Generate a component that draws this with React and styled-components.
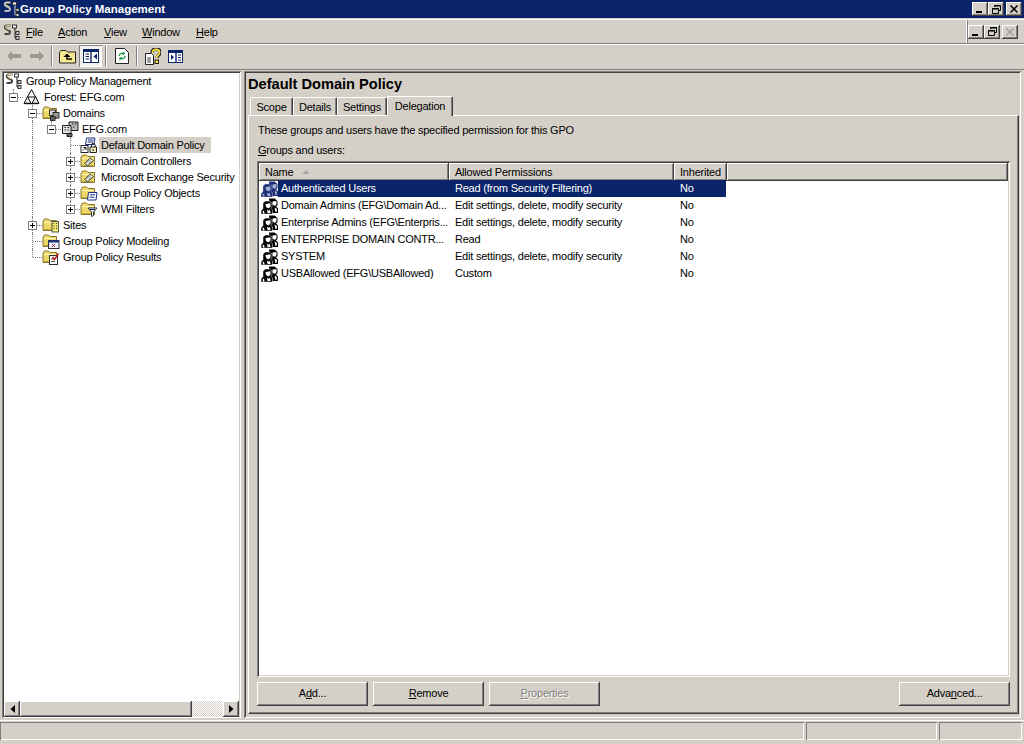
import React from "react";
import styled, { createGlobalStyle, css } from "styled-components";

const GlobalStyle = createGlobalStyle`
  html, body {
    margin: 0;
    padding: 0;
    background: #d4d0c8;
  }
  body {
    font-family: "Liberation Sans", Arial, sans-serif;
    font-size: 11px;
    letter-spacing: -0.22px;
    color: #000;
  }
  svg {
    flex: none;
  }
`;

const raised = css`
  box-shadow: inset -1px -1px #404040, inset 1px 1px #fff, inset -2px -2px #808080;
`;

const sunken = css`
  box-shadow: inset 1px 1px #808080, inset -1px -1px #fff, inset 2px 2px #404040, inset -2px -2px #d4d0c8;
`;

const Window = styled.div`
  width: 1024px;
  height: 744px;
  overflow: hidden;
  display: flex;
  flex-direction: column;
  background: #d4d0c8;
`;

const TitleBar = styled.div`
  height: 18px;
  background: #0a246a;
  display: flex;
  align-items: center;
  padding: 0 2px 0 3px;
  color: #fff;
  font-weight: bold;
  font-size: 11.5px;
  letter-spacing: 0;
`;

const TitleText = styled.span`
  flex: 1;
`;

const CaptionGroup = styled.div`
  display: flex;
  align-items: center;
`;

const CaptionButton = styled.div`
  width: 16px;
  height: 14px;
  background: #d4d0c8;
  margin-left: ${(p) => (p.$gap ? "2px" : "0")};
  display: flex;
  align-items: center;
  justify-content: center;
  color: ${(p) => (p.$disabled ? "#a0a0a0" : "#000")};
  ${raised}
`;

const MenuBar = styled.div`
  height: 25px;
  margin-top: 1px;
  display: flex;
  align-items: center;
  border-top: 1px solid #fff;
  border-bottom: 1px solid #808080;
  box-sizing: border-box;
  padding-left: 3px;
`;

const MenuItems = styled.div`
  display: flex;
  flex: 1;
  align-items: center;
  margin-left: 6px;
  height: 100%;
  border-right: 1px solid #fff;
  box-shadow: 1px 0 #808080;
`;

const MenuItem = styled.span`
  width: ${(p) => p.$w}px;
`;

const MdiButtons = styled.div`
  display: flex;
  padding: 0 3px 0 1px;
  width: 53px;
`;

const Toolbar = styled.div`
  height: 24px;
  border-top: 1px solid #fff;
  border-bottom: 1px solid #808080;
  display: flex;
  align-items: center;
  padding: 0 0 0 2px;
`;

const ToolStrip = styled.div`
  display: flex;
  align-items: center;
  margin-top: -2px;
`;

const ToolButton = styled.div`
  width: 23px;
  height: 22px;
  display: flex;
  align-items: center;
  justify-content: center;
  ${(p) =>
    p.$pressed &&
    css`
      background: repeating-conic-gradient(#fff 0 25%, #e8e6e0 0 50%) 0 0 / 2px 2px;
      box-shadow: inset 1px 1px #808080, inset -1px -1px #fff;
    `}
`;

const ToolSep = styled.div`
  width: 2px;
  height: 20px;
  margin: 0 3px;
  border-left: 1px solid #808080;
  border-right: 1px solid #fff;
  box-sizing: border-box;
`;

const Main = styled.div`
  flex: 1;
  display: flex;
  gap: 3px;
  padding: 1px 3px 2px 2px;
  min-height: 0;
`;

const TreePane = styled.div`
  width: 239px;
  display: flex;
  flex-direction: column;
  background: #fff;
  padding: 2px 2px 1px;
  box-sizing: border-box;
  ${sunken}
`;

const TreeBody = styled.div`
  flex: 1;
`;

const TreeRow = styled.div`
  height: 16px;
  display: flex;
  align-items: center;
  white-space: nowrap;
`;

const Guide = styled.div`
  position: relative;
  width: 19px;
  height: 16px;
  flex: none;
  &::before {
    content: "";
    display: ${(p) => (p.$up ? "block" : "none")};
    position: absolute;
    left: 9px;
    top: 0;
    bottom: ${(p) => (p.$down ? "0" : "8px")};
    border-left: 1px dotted #808080;
  }
  &::after {
    content: "";
    display: ${(p) => (p.$right ? "block" : "none")};
    position: absolute;
    left: 10px;
    right: 0;
    top: 8px;
    border-top: 1px dotted #808080;
  }
`;

const Expander = styled.svg`
  position: absolute;
  left: 5px;
  top: 4px;
  z-index: 1;
`;

const TreeIconSlot = styled.div`
  width: 18px;
  height: 16px;
  margin-left: ${(p) => (p.$root ? "1px" : "0")};
  flex: none;
  display: flex;
  align-items: center;
`;

const TreeLabel = styled.span`
  margin-left: 1px;
  padding: 1px 6px 1px 2px;
  line-height: 14px;
  background: ${(p) => (p.$selected ? "#d4d0c8" : "transparent")};
`;

const Scrollbar = styled.div`
  height: 16px;
  display: flex;
  background: repeating-conic-gradient(#d4d0c8 0 25%, #fff 0 50%) 0 0 / 2px 2px;
`;

const ScrollButton = styled.div`
  width: 16px;
  height: 16px;
  background: #d4d0c8;
  display: flex;
  align-items: center;
  justify-content: center;
  ${raised}
`;

const ScrollThumb = styled.div`
  width: 172px;
  background: #d4d0c8;
  ${raised}
`;

const ScrollTrack = styled.div`
  flex: 1;
`;

const DetailPane = styled.div`
  flex: 1;
  display: flex;
  flex-direction: column;
  padding: 2px 2px 4px 4px;
  min-width: 0;
  ${sunken}
`;

const PolicyTitle = styled.div`
  font-weight: bold;
  font-size: 14.6px;
  letter-spacing: 0;
  height: 22px;
  line-height: 22px;
`;

const TabStrip = styled.div`
  display: flex;
  align-items: flex-end;
  height: 20px;
  padding-left: 2px;
  position: relative;
  z-index: 1;
`;

const Tab = styled.div`
  width: ${(p) => p.$w}px;
  height: ${(p) => (p.$active ? "20px" : "18px")};
  line-height: ${(p) => (p.$active ? "18px" : "19px")};
  text-align: center;
  box-sizing: border-box;
  background: #d4d0c8;
  border-top: 1px solid #fff;
  border-left: 1px solid #fff;
  border-right: 1px solid #404040;
  border-radius: 2px 2px 0 0;
  margin-bottom: ${(p) => (p.$active ? "-1px" : "0")};
  box-shadow: inset -1px 0 #808080;
`;

const TabPanel = styled.div`
  flex: 1;
  display: flex;
  flex-direction: column;
  padding: 6px 8px 7px 8px;
  border-top: 1px solid #fff;
  border-left: 1px solid #fff;
  border-right: 1px solid #404040;
  border-bottom: 1px solid #404040;
  box-shadow: inset -1px -1px #808080;
  min-height: 0;
`;

const Description = styled.div`
  height: 14px;
  line-height: 14px;
  padding-left: 1px;
  margin-top: 1px;
`;

const GroupsLabel = styled.div`
  height: 14px;
  line-height: 14px;
  padding-left: 1px;
  margin-top: 6px;
  margin-bottom: 4px;
`;

const ListBox = styled.div`
  flex: 1;
  background: #fff;
  padding: 2px;
  min-height: 0;
  ${sunken}
`;

const ListHeader = styled.div`
  display: grid;
  grid-template-columns: 190px 225px 53px 1fr;
  height: 17px;
`;

const HeaderCell = styled.div`
  background: #d4d0c8;
  padding-left: 6px;
  line-height: 18px;
  display: flex;
  align-items: center;
  ${raised}
`;

const SortArrow = styled.span`
  width: 0;
  height: 0;
  margin-left: 9px;
  border-left: 4px solid transparent;
  border-right: 4px solid transparent;
  border-bottom: 4px solid #a8a8a8;
`;

const ListRow = styled.div`
  display: flex;
  height: 17px;
`;

const RowIcon = styled.div`
  width: 17px;
  padding-left: 2px;
  display: flex;
  align-items: center;
`;

const RowCells = styled.div`
  display: grid;
  grid-template-columns: 171px 225px 52px;
  line-height: 17px;
  background: ${(p) => (p.$selected ? "#0a246a" : "transparent")};
  color: ${(p) => (p.$selected ? "#fff" : "#000")};
`;

const NameCell = styled.div`
  padding-left: 3px;
  white-space: nowrap;
  overflow: hidden;
`;

const ValueCell = styled.div`
  padding-left: 6px;
  white-space: nowrap;
`;

const ButtonRow = styled.div`
  display: flex;
  gap: 5px;
  margin-top: 5px;
`;

const PushButton = styled.div`
  width: 111px;
  height: 24px;
  line-height: 23px;
  text-align: center;
  background: #d4d0c8;
  margin-left: ${(p) => (p.$push ? "auto" : "0")};
  color: ${(p) => (p.$disabled ? "#808080" : "#000")};
  text-shadow: ${(p) => (p.$disabled ? "1px 1px #fff" : "none")};
  ${raised}
`;

const StatusBar = styled.div`
  height: 24px;
  display: flex;
  gap: 2px;
  border-top: 1px solid #fff;
  padding: 1px 2px 4px 0;
  box-sizing: border-box;
`;

const StatusCell = styled.div`
  width: ${(p) => (p.$w ? `${p.$w}px` : "auto")};
  flex: ${(p) => (p.$w ? "none" : "1")};
  box-shadow: inset 1px 1px #808080, inset -1px -1px #fff;
`;

// icons

const MmcIcon = ({ light }) => {
  const ink = light ? "#e8e8e8" : "#222";
  return (
    <svg width="17" height="16" viewBox="0 0 17 16">
      <path d="M7.500 1.500H3.500C1.500 1.500 1 4 3 5l3 1.500C8 7.500 7 10 5 10H1.500" fill="none" stroke={light ? "#b8b8b8" : "#444"} strokeWidth="2" />
      <path d="M7 1.500H3.600C2.200 1.500 2 3.600 3.300 4.300l3 1.500" fill="none" stroke="#f0e090" strokeWidth="1" />
      <path d="M12 3v11M12 9h2M12 14h2" stroke={ink} fill="none" />
      <rect x="9.500" y="1" width="4" height="3" fill="#fff" stroke="#222" strokeWidth=".9" />
      <rect x="13" y="7.500" width="3" height="3" fill="#d8d8d8" stroke="#222" strokeWidth=".9" />
      <rect x="13" y="12.500" width="3" height="3" fill="#d8d8d8" stroke="#222" strokeWidth=".9" />
    </svg>
  );
};

const ForestIcon = () => (
  <svg width="17" height="16" viewBox="0 0 17 16">
    <path d="M8.500 .500L12.500 8H4.500Z" fill="#fff" stroke="#111" />
    <path d="M4.500 7.500L8 14.500H1Z" fill="#e8e8e8" stroke="#111" />
    <path d="M12.500 7.500L16 14.500H9Z" fill="#e8e8e8" stroke="#111" />
    <path d="M2 14.500h13" stroke="#111" strokeWidth="1.400" />
  </svg>
);

const FolderBase = () => (
  <>
    <path d="M1 4.500L2.500 2H6.500L8 3.500H14.500V13.500H1Z" fill="#eed868" stroke="#7a6a20" strokeWidth=".9" />
    <path d="M2 5.500h11.500" stroke="#fff8c8" />
    <path d="M2 12.500h11" stroke="#c4a838" />
  </>
);

const DomainsIcon = () => (
  <svg width="18" height="16" viewBox="0 0 18 16">
    <FolderBase />
    <rect x="7.500" y="5" width="6" height="5.500" fill="#d8d8d8" stroke="#222" strokeWidth=".9" />
    <rect x="11" y="7.500" width="6" height="5.500" fill="#9a9a9a" stroke="#222" strokeWidth=".9" />
    <rect x="8.500" y="11.500" width="4.500" height="4" fill="#666" stroke="#222" strokeWidth=".9" />
  </svg>
);

const DomainIcon = () => (
  <svg width="18" height="16" viewBox="0 0 18 16">
    <path d="M8 1h9v8.500H8z" fill="#b8b8b8" stroke="#222" />
    <path d="M1.500 4.500h8.500v8H1.500z" fill="#e0e0e0" stroke="#222" />
    <path d="M3.500 6.500h1.500M6.500 6.500H8M3.500 9H5M6.500 9H8M11 3h1.500M14 3h1.500M12 6h1.500" stroke="#222" />
    <path d="M6 12.500h5v3H6z" fill="#666" stroke="#222" />
  </svg>
);

const GpoLinkIcon = () => (
  <svg width="18" height="16" viewBox="0 0 18 16">
    <path d="M6.500 1H15l-1 6.500H5.500z" fill="#fff" stroke="#1a2f80" />
    <path d="M8 3h5.500M7.500 5h5.500" stroke="#1a2f80" />
    <rect x="1" y="8.500" width="7" height="7" fill="#fff" stroke="#222" />
    <path d="M3 13.500l3-3M3.500 10.500H6V13" fill="none" stroke="#222" />
    <path d="M10 10h6.500v5.500H10z" fill="#f0e8c0" stroke="#222" />
    <path d="M11.500 10V8a1.800 1.800 0 0 1 3.600 0v2" fill="none" stroke="#222" />
    <path d="M13.200 12v2" stroke="#222" />
  </svg>
);

const OuIcon = () => (
  <svg width="18" height="16" viewBox="0 0 18 16">
    <FolderBase />
    <path d="M4.500 10.500L10 5l3.500 2.500-5.500 5.500z" fill="#e4e4dc" stroke="#444" strokeWidth=".9" />
    <path d="M6.500 10l3.500-3.500M8 11.500l3.500-3.500" stroke="#666" strokeWidth=".8" />
  </svg>
);

const GpoFolderIcon = () => (
  <svg width="18" height="16" viewBox="0 0 18 16">
    <FolderBase />
    <path d="M8.500 7.500H17l-1 7.500H7.500z" fill="#fff" stroke="#1a2f80" />
    <path d="M10 9.800h5M9.500 12.200h5" stroke="#1a2f80" />
  </svg>
);

const WmiIcon = () => (
  <svg width="18" height="16" viewBox="0 0 18 16">
    <FolderBase />
    <path d="M8 7h9l-3.500 4v3.500l-2 1V11z" fill="#fff" stroke="#333" />
    <path d="M10 8.500h5" stroke="#1a2f80" />
  </svg>
);

const SitesIcon = () => (
  <svg width="18" height="16" viewBox="0 0 18 16">
    <FolderBase />
    <rect x="10" y="4.500" width="6.500" height="10.500" fill="#f4ee70" stroke="#444" strokeWidth=".9" />
    <path d="M11.500 6.500h1M14 6.500h1M11.500 9h1M14 9h1M11.500 11.500h1M14 11.500h1" stroke="#333" />
  </svg>
);

const ModelingIcon = () => (
  <svg width="18" height="16" viewBox="0 0 18 16">
    <FolderBase />
    <rect x="6.500" y="7.500" width="10.500" height="8" fill="#eeeeff" stroke="#333" />
    <rect x="6.500" y="7.500" width="10.500" height="2" fill="#1a2f80" />
    <path d="M10 11l3 3M13 11l-3 3" stroke="#a03030" />
  </svg>
);

const ResultsIcon = () => (
  <svg width="18" height="16" viewBox="0 0 18 16">
    <FolderBase />
    <rect x="7.500" y="6.500" width="8" height="9" fill="#fff" stroke="#333" />
    <path d="M9 10h3M9 12.500h4" stroke="#555" />
    <path d="M10.500 8l2 2.500 4-6" fill="none" stroke="#c01818" strokeWidth="1.400" />
  </svg>
);

// two overlapping figures; the selected row tints it blue instead of black
const GroupIcon = ({ selected }) => {
  const ink = selected ? "#1c2f72" : "#000";
  const skin = selected ? "#a4aed4" : "#fff";
  return (
    <svg width="17" height="17" viewBox="0 0 17 17">
      <path d="M8 1.500h5.500L16.500 4v4l-1.500 1.500 2 2v4.500H9z" fill={ink} />
      <path d="M11.500 4.500l4-.5v3l-1.500 2-2.500-1.500z" fill={skin} />
      <path d="M13.500 10.500l2.500 1.500-.5 3h-1z" fill={skin} />
      <path d="M2 6l2.500-2h4L11 6v4l-1 1.500 1.500 1.500v4H0v-3l2-2.500z" fill={ink} stroke={skin} strokeWidth=".5" />
      <path d="M4.500 7l5-.7v3.200L7.500 11.500 5 10z" fill={skin} />
      <path d="M6 12.500l1.500 1.200 1.500-1 .5 3.300H6.500z" fill={skin} />
      <path d="M1.500 14.500l1.500-1 .5 3H2z" fill={skin} />
    </svg>
  );
};

const ArrowIcon = ({ flip }) => (
  <svg width="14" height="10" viewBox="0 0 14 10" style={{ transform: flip ? "scaleX(-1)" : "none" }}>
    <path d="M0 5l5-5v3h9v4H5v3z" fill="#9a9890" />
  </svg>
);

const UpFolderIcon = () => (
  <svg width="17" height="15" viewBox="0 0 17 15">
    <path d="M.5 3.500L2 1.500h5L8.500 3h8v11H.5z" fill="#f6e98e" stroke="#222" />
    <path d="M8 7v3h5" fill="none" stroke="#000" strokeWidth="1.300" />
    <path d="M8 4.500L4.500 8h7z" fill="#000" />
  </svg>
);

const TreeToggleIcon = () => (
  <svg width="16" height="14" viewBox="0 0 16 14">
    <rect x=".5" y=".5" width="15" height="13" fill="#fff" stroke="#0a246a" />
    <rect x=".5" y=".5" width="15" height="2.500" fill="#0a246a" />
    <path d="M8 1v12" stroke="#0a246a" strokeWidth="1.400" />
    <path d="M2.500 5h3.500M2.500 7.500h3.500M2.500 10h3.500" stroke="#0a246a" strokeWidth="1.200" />
    <path d="M14 4.500v6l-3.500-3z" fill="#0a246a" />
  </svg>
);

const RefreshIcon = () => (
  <svg width="14" height="16" viewBox="0 0 14 16">
    <path d="M.5.500h9l4 4v11H.5z" fill="#fff" stroke="#222" />
    <path d="M4 8a3 3 0 0 1 5-2M10 8a3 3 0 0 1-5 2" fill="none" stroke="#109030" strokeWidth="1.200" />
    <path d="M9.500 3.500v3h-3zM4.500 12.500v-3h3z" fill="#109030" />
  </svg>
);

const HelpIcon = () => (
  <svg width="16" height="17" viewBox="0 0 16 17">
    <path d="M.5 5.500h6l2 2v9h-8z" fill="#fff" stroke="#222" />
    <path d="M2 10h4M2 12h4M2 14h4" stroke="#444" />
    <path d="M7 5c0-3 1.500-4 4-4s4 1.500 4 3.500c0 3-3 2.500-3 5.500" fill="none" stroke="#222" strokeWidth="3.400" />
    <path d="M7.500 5c0-2.500 1-3.500 3.500-3.500s3.500 1 3.500 3c0 3-3 2.500-3 5.500" fill="none" stroke="#f4e040" strokeWidth="1.800" />
    <rect x="10" y="12" width="3.500" height="3.500" fill="#f4e040" stroke="#222" />
  </svg>
);

const ActionPaneIcon = () => (
  <svg width="15" height="13" viewBox="0 0 15 13">
    <rect x=".5" y=".5" width="14" height="12" fill="#fff" stroke="#0a246a" />
    <rect x=".5" y=".5" width="14" height="2.500" fill="#0a246a" />
    <path d="M8 1v11" stroke="#0a246a" strokeWidth="1.400" />
    <path d="M3 4.500v5.500l3-2.750z" fill="#0a246a" />
    <path d="M10 5h3M10 7.500h3M10 10h3" stroke="#0a246a" strokeWidth="1.200" />
  </svg>
);

const MinimizeGlyph = () => (
  <svg width="8" height="8" viewBox="0 0 8 8">
    <path d="M0 6h6v2H0z" fill="currentColor" />
  </svg>
);

const RestoreGlyph = () => (
  <svg width="9" height="9" viewBox="0 0 9 9" fill="none" stroke="currentColor">
    <path d="M2.500 2V.5h6v5H7" />
    <path d="M2.500 1h6" />
    <path d="M.5 3.500h6v5h-6z" />
    <path d="M.5 4h6" />
  </svg>
);

const CloseGlyph = () => (
  <svg width="8" height="8" viewBox="0 0 8 8" stroke="currentColor" strokeWidth="1.500">
    <path d="M.5.500l7 7M7.500.500l-7 7" />
  </svg>
);

const Triangle = ({ right }) => (
  <svg width="5" height="8" viewBox="0 0 5 8" style={{ transform: right ? "none" : "scaleX(-1)" }}>
    <path d="M0 0l4.500 4L0 8z" fill="#000" />
  </svg>
);

const ExpanderBox = ({ open }) => (
  <Expander width="9" height="9" viewBox="0 0 9 9">
    <rect x=".5" y=".5" width="8" height="8" fill="#fff" stroke="#808080" />
    <path d={open ? "M2 4.500h5" : "M2 4.500h5M4.500 2v5"} stroke="#000" />
  </Expander>
);

const CaptionButtons = ({ disabledClose }) => (
  <CaptionGroup>
    <CaptionButton>
      <MinimizeGlyph />
    </CaptionButton>
    <CaptionButton>
      <RestoreGlyph />
    </CaptionButton>
    <CaptionButton $gap $disabled={disabledClose}>
      <CloseGlyph />
    </CaptionButton>
  </CaptionGroup>
);

const menus = [
  { label: "File", w: 32 },
  { label: "Action", w: 46 },
  { label: "View", w: 38 },
  { label: "Window", w: 54 },
  { label: "Help", w: 40 },
];

const pipe = { up: true, down: true };
const tee = { up: true, down: true, right: true };
const corner = { up: true, right: true };

const treeNodes = [
  { cells: [], Icon: MmcIcon, label: "Group Policy Management" },
  { cells: [{ ...corner, box: "open" }], Icon: ForestIcon, label: "Forest: EFG.com" },
  { cells: [{}, { ...tee, box: "open" }], Icon: DomainsIcon, label: "Domains" },
  { cells: [{}, pipe, { ...corner, box: "open" }], Icon: DomainIcon, label: "EFG.com" },
  { cells: [{}, pipe, {}, tee], Icon: GpoLinkIcon, label: "Default Domain Policy", selected: true },
  { cells: [{}, pipe, {}, { ...tee, box: "closed" }], Icon: OuIcon, label: "Domain Controllers" },
  { cells: [{}, pipe, {}, { ...tee, box: "closed" }], Icon: OuIcon, label: "Microsoft Exchange Security" },
  { cells: [{}, pipe, {}, { ...tee, box: "closed" }], Icon: GpoFolderIcon, label: "Group Policy Objects" },
  { cells: [{}, pipe, {}, { ...corner, box: "closed" }], Icon: WmiIcon, label: "WMI Filters" },
  { cells: [{}, { ...tee, box: "closed" }], Icon: SitesIcon, label: "Sites" },
  { cells: [{}, tee], Icon: ModelingIcon, label: "Group Policy Modeling" },
  { cells: [{}, corner], Icon: ResultsIcon, label: "Group Policy Results" },
];

const permissions = [
  { name: "Authenticated Users", allowed: "Read (from Security Filtering)", inherited: "No", selected: true },
  { name: "Domain Admins (EFG\\Domain Ad...", allowed: "Edit settings, delete, modify security", inherited: "No" },
  { name: "Enterprise Admins (EFG\\Enterpris...", allowed: "Edit settings, delete, modify security", inherited: "No" },
  { name: "ENTERPRISE DOMAIN CONTR...", allowed: "Read", inherited: "No" },
  { name: "SYSTEM", allowed: "Edit settings, delete, modify security", inherited: "No" },
  { name: "USBAllowed (EFG\\USBAllowed)", allowed: "Custom", inherited: "No" },
];

const tabs = [
  { label: "Scope", w: 43 },
  { label: "Details", w: 44 },
  { label: "Settings", w: 50 },
  { label: "Delegation", w: 66, active: true },
];

export default function App() {
  return (
    <Window>
      <GlobalStyle />
      <TitleBar>
        <MmcIcon light />
        <TitleText>Group Policy Management</TitleText>
        <CaptionButtons />
      </TitleBar>

      <MenuBar>
        <MmcIcon />
        <MenuItems>
          {menus.map((m) => (
            <MenuItem key={m.label} $w={m.w}>
              <u>{m.label[0]}</u>
              {m.label.slice(1)}
            </MenuItem>
          ))}
        </MenuItems>
        <MdiButtons>
          <CaptionButtons disabledClose />
        </MdiButtons>
      </MenuBar>

      <Toolbar>
        <ToolStrip>
          <ToolButton>
            <ArrowIcon />
          </ToolButton>
          <ToolButton>
            <ArrowIcon flip />
          </ToolButton>
          <ToolSep />
          <ToolButton>
            <UpFolderIcon />
          </ToolButton>
          <ToolButton $pressed>
            <TreeToggleIcon />
          </ToolButton>
          <ToolSep />
          <ToolButton>
            <RefreshIcon />
          </ToolButton>
          <ToolSep />
          <ToolButton>
            <HelpIcon />
          </ToolButton>
          <ToolButton>
            <ActionPaneIcon />
          </ToolButton>
        </ToolStrip>
      </Toolbar>

      <Main>
        <TreePane>
          <TreeBody>
            {treeNodes.map((node) => (
              <TreeRow key={node.label}>
                {node.cells.map((cell, i) => (
                  <Guide key={i} $up={cell.up} $down={cell.down} $right={cell.right}>
                    {cell.box && <ExpanderBox open={cell.box === "open"} />}
                  </Guide>
                ))}
                <TreeIconSlot $root={node.cells.length === 0}>
                  <node.Icon />
                </TreeIconSlot>
                <TreeLabel $selected={node.selected}>{node.label}</TreeLabel>
              </TreeRow>
            ))}
          </TreeBody>
          <Scrollbar>
            <ScrollButton>
              <Triangle />
            </ScrollButton>
            <ScrollThumb />
            <ScrollTrack />
            <ScrollButton>
              <Triangle right />
            </ScrollButton>
          </Scrollbar>
        </TreePane>

        <DetailPane>
          <PolicyTitle>Default Domain Policy</PolicyTitle>
          <TabStrip>
            {tabs.map((t) => (
              <Tab key={t.label} $w={t.w} $active={t.active}>
                {t.label}
              </Tab>
            ))}
          </TabStrip>
          <TabPanel>
            <Description>These groups and users have the specified permission for this GPO</Description>
            <GroupsLabel>
              <u>G</u>roups and users:
            </GroupsLabel>
            <ListBox>
              <ListHeader>
                <HeaderCell>
                  Name
                  <SortArrow />
                </HeaderCell>
                <HeaderCell>Allowed Permissions</HeaderCell>
                <HeaderCell>Inherited</HeaderCell>
                <HeaderCell />
              </ListHeader>
              {permissions.map((row) => (
                <ListRow key={row.name}>
                  <RowIcon>
                    <GroupIcon selected={row.selected} />
                  </RowIcon>
                  <RowCells $selected={row.selected}>
                    <NameCell>{row.name}</NameCell>
                    <ValueCell>{row.allowed}</ValueCell>
                    <ValueCell>{row.inherited}</ValueCell>
                  </RowCells>
                </ListRow>
              ))}
            </ListBox>
            <ButtonRow>
              <PushButton>
                A<u>d</u>d...
              </PushButton>
              <PushButton>
                <u>R</u>emove
              </PushButton>
              <PushButton $disabled>
                <u>P</u>roperties
              </PushButton>
              <PushButton $push>
                Adva<u>n</u>ced...
              </PushButton>
            </ButtonRow>
          </TabPanel>
        </DetailPane>
      </Main>

      <StatusBar>
        <StatusCell />
        <StatusCell $w={131} />
        <StatusCell $w={83} />
      </StatusBar>
    </Window>
  );
}
